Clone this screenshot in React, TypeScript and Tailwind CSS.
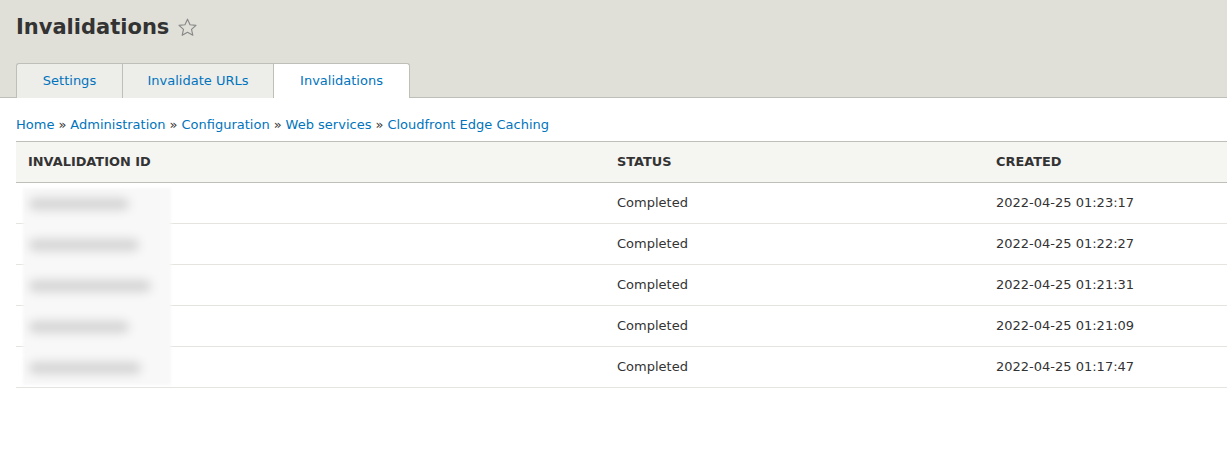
import React from "react";

const rows = [
  { status: "Completed", created: "2022-04-25 01:23:17" },
  { status: "Completed", created: "2022-04-25 01:22:27" },
  { status: "Completed", created: "2022-04-25 01:21:31" },
  { status: "Completed", created: "2022-04-25 01:21:09" },
  { status: "Completed", created: "2022-04-25 01:17:47" },
];

const bars = [
  { top: 10, left: 6, w: 100 },
  { top: 51, left: 6, w: 110 },
  { top: 92, left: 6, w: 122 },
  { top: 133, left: 6, w: 100 },
  { top: 174, left: 6, w: 112 },
];

export default function App() {
  return (
    <div className="min-h-[457px] bg-white text-[#333] font-['DejaVu_Sans',sans-serif]">
      <div className="bg-[#e0e0d8] border-b border-[#bfbfba] px-4">
        <div className="pt-[12px] flex items-center h-[42px] leading-[30px]">
          <h1 className="text-[21px] font-bold text-[#333] leading-[30px]">Invalidations</h1>
          <svg className="ml-[8px] mt-[1px]" width="21" height="21" viewBox="0 0 24 24" fill="none" stroke="#888" strokeWidth="1.3" strokeLinejoin="round">
            <path d="M12 2.5l2.9 6.3 6.8.7-5.1 4.6 1.5 6.8L12 17.4l-6.1 3.5 1.5-6.8-5.1-4.6 6.8-.7z" />
          </svg>
        </div>
        <div className="mt-[21px] flex -mb-px text-[13px] text-[#0074bd]">
          <div className="h-[35px] flex items-center justify-center w-[106px] bg-[#ededea] border-t border-l border-[#bfbfba] rounded-tl-[3px]">
            Settings
          </div>
          <div className="h-[35px] flex items-center justify-center w-[151px] bg-[#ededea] border-t border-l border-[#bfbfba]">
            Invalidate URLs
          </div>
          <div className="h-[35px] flex items-center justify-center w-[137px] bg-white border-t border-l border-r border-[#bfbfba] rounded-tr-[3px]">
            Invalidations
          </div>
        </div>
      </div>

      <div className="pl-4">
        <div className="mt-[17px] h-[20px] flex items-center text-[13px] text-[#0074bd]">
          <span>Home</span>
          <span className="text-[#333] mx-[4px]">»</span>
          <span>Administration</span>
          <span className="text-[#333] mx-[4px]">»</span>
          <span>Configuration</span>
          <span className="text-[#333] mx-[4px]">»</span>
          <span>Web services</span>
          <span className="text-[#333] mx-[4px]">»</span>
          <span>Cloudfront Edge Caching</span>
        </div>

        <div className="mt-[6px]">
          <div className="grid grid-cols-[589px_379px_1fr] bg-[#f5f5f2] border-t border-b border-[#bfbfba] h-[42px] items-center text-[12.9px] font-bold uppercase text-[#333]">
            <div className="pl-3">Invalidation ID</div>
            <div className="pl-3">Status</div>
            <div className="pl-3">Created</div>
          </div>
          <div className="relative">
            {rows.map((r, i) => (
              <div
                key={i}
                className="grid grid-cols-[589px_379px_1fr] border-b border-[#e6e4df] h-[41px] items-center text-[13px] text-[#333]"
              >
                <div className="pl-3"></div>
                <div className="pl-3">{r.status}</div>
                <div className="pl-3">{r.created}</div>
              </div>
            ))}
            <div className="absolute left-[7px] top-[5px] w-[148px] h-[197px] bg-[#f8f8f8] blur-[1.5px] overflow-hidden">
              {bars.map((b, i) => (
                <div
                  key={i}
                  className="absolute h-[12px] bg-[#d4d4d4] rounded-full blur-[5px]"
                  style={{ top: b.top, left: b.left, width: b.w }}
                />
              ))}
            </div>
          </div>
        </div>
      </div>
    </div>
  );
}
